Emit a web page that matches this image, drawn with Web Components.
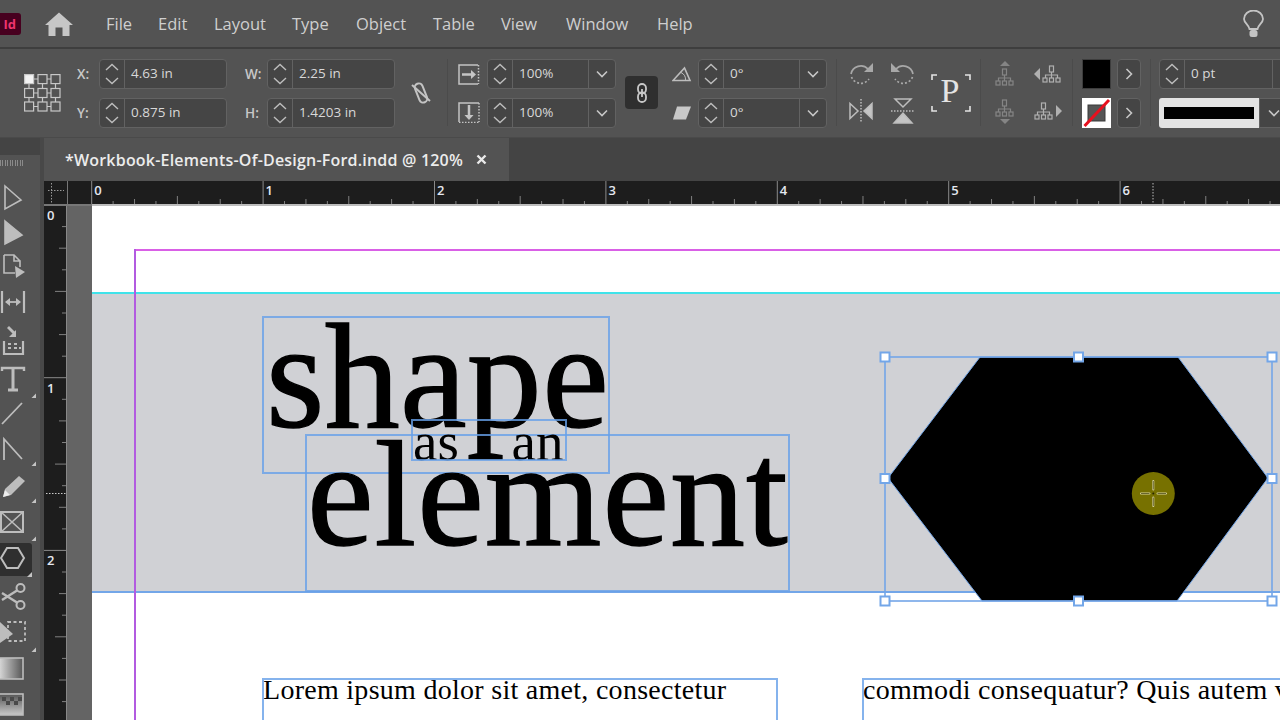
<!DOCTYPE html>
<html lang="en"><head><meta charset="utf-8"><title>InDesign</title>
<style>html,body{margin:0;padding:0;width:1280px;height:720px;overflow:hidden;background:#535353}</style>
</head><body>
<id-app></id-app>
<script>
const UI='"Open Sans","Noto Sans",sans-serif';
function def(name,css,html,init){
  customElements.define(name,class extends HTMLElement{
    connectedCallback(){
      if(this.shadowRoot)return;
      const r=this.attachShadow({mode:'open'});
      r.innerHTML='<style>'+css+'</style>'+(typeof html==='function'?html(this):html);
      if(init)init(this,r);
    }
  });
}
const I='#bdbdbd';

def('id-app',`:host{display:grid;grid-template-rows:49px 89px 43px 1fr;width:1280px;height:720px;overflow:hidden;background:#535353;font-family:${UI}}
.work{display:grid;grid-template-columns:44px 1fr;min-height:0;min-width:0}
.stack{display:grid;grid-template-rows:25px 1fr;min-height:0;min-width:0}
.view{display:grid;grid-template-columns:23px 25px 1fr;min-height:0;min-width:0;overflow:hidden}
.paste{background:#646464}`,
`<id-menubar></id-menubar><id-controlbar></id-controlbar><id-tabbar></id-tabbar>
<div class="work"><id-tools></id-tools><div class="stack"><id-hruler></id-hruler><div class="view"><id-vruler></id-vruler><div class="paste"></div><id-page></id-page></div></div></div>`);

def('id-menubar',`:host{display:flex;align-items:center;background:#535353;border-bottom:2px solid #3e3e3e;box-sizing:border-box;height:49px;color:#cfcfcf;font-size:16.5px;position:relative}
.logo{width:21px;height:22px;background:#47001f;border-radius:0 3px 3px 0;color:#f0346e;font:700 13px/22px ${UI};text-align:right;padding-right:5px;box-sizing:border-box;flex:none}
.home{margin-left:24px;flex:none;display:block}
nav{display:flex;margin-left:33px}
span{flex:none}
.bulb{margin-left:auto;margin-right:16px;display:block}`,
`<div class="logo">Id</div>
<svg class="home" width="28" height="24" viewBox="0 0 28 24"><path d="M14 0.5 L28 13 L24.5 13 L24.5 24 L17.5 24 L17.5 15.5 L10.5 15.5 L10.5 24 L3.5 24 L3.5 13 L0 13 Z" fill="#c6c6c6"/></svg>
<nav><span style="width:52px">File</span><span style="width:56px">Edit</span><span style="width:78px">Layout</span><span style="width:64px">Type</span><span style="width:77px">Object</span><span style="width:68px">Table</span><span style="width:65px">View</span><span style="width:91px">Window</span><span>Help</span></nav>
<svg class="bulb" width="21" height="28" viewBox="0 0 21 28" fill="none"><path d="M6.5 19 C6 15 1 13 1 9 A9.5 8.5 0 0 1 20 9 C20 13 15 15 14.5 19 Z" stroke="#c4c4c4" stroke-width="1.8"/><rect x="6.5" y="20" width="8" height="7" rx="2.5" fill="#c4c4c4"/></svg>`);

def('id-field',`:host{display:flex;box-sizing:border-box;height:30px;border:1.5px solid #626262;border-radius:4px;background:#454545;color:#d8d8d8;font-size:13.5px;overflow:hidden;flex:none}
.sp{width:24px;flex:none;border-right:1.5px solid #626262;display:flex;align-items:center;justify-content:center}
.v{flex:1;padding-left:6px;line-height:26px;white-space:nowrap}
.dd{width:26px;flex:none;border-left:1.5px solid #626262;display:flex;align-items:center;justify-content:center}`,
t=>`<div class="sp"><svg width="16" height="26" viewBox="0 0 16 26" fill="none" stroke="#bdbdbd" stroke-width="1.4"><path d="M2 9 L8 3.5 L14 9"/><path d="M2 17 L8 22.5 L14 17"/></svg></div><div class="v">${t.getAttribute('value')}</div>${t.hasAttribute('dropdown')?'<div class="dd"><svg width="14" height="10" viewBox="0 0 14 10" fill="none" stroke="#c6c6c6" stroke-width="1.6"><path d="M2 2.5 L7 7.5 L12 2.5"/></svg></div>':''}`,
(t)=>{t.style.width=t.getAttribute('w')+'px'});

const tree=(tx,ty,dim)=>`<g stroke="${dim}" stroke-width="1.2"><rect x="${tx+6.5}" y="${ty}" width="4" height="6"/><path d="M${tx+8.5} ${ty+6}v3M${tx+2.5} ${ty+12}v-3h12v3M${tx+8.5} ${ty+9}v3"/><rect x="${tx}" y="${ty+12}" width="4" height="4"/><rect x="${tx+6.5}" y="${ty+12}" width="4" height="4"/><rect x="${tx+13}" y="${ty+12}" width="4" height="4"/></g>`;

def('id-chev',`:host{display:flex;align-items:center;justify-content:center;box-sizing:border-box;width:24px;height:30px;border:1.5px solid #626262;border-radius:4px;background:#454545;flex:none}`,
`<svg width="10" height="14" viewBox="0 0 10 14" fill="none" stroke="#c6c6c6" stroke-width="1.6"><path d="M2.5 2 L7.5 7 L2.5 12"/></svg>`);

def('id-controlbar',`:host{display:flex;align-items:stretch;box-sizing:border-box;height:89px;padding:10px 0 11px 24px;background:#535353;border-bottom:1px solid #4a4a4a;overflow:hidden;color:#cfcfcf}
.col{display:flex;flex-direction:column;gap:8.5px;flex:none}
.row{display:flex;align-items:center;height:30px}
.lab{width:22px;flex:none;font:600 13.5px/30px ${UI};color:#c8c8c8}
.ic{width:22px;margin-right:7px;flex:none;display:flex;align-items:center}
.ic2{width:20px;margin-right:6px;flex:none;display:flex;align-items:center}
.div{width:1px;background:#4b4b4b;flex:none}
.c{flex:none;display:flex;align-items:center;justify-content:center}
.anchor{flex:none;align-self:center;display:block}
.chain{width:33px;height:33px;background:#2f2f2f;border-radius:4px;flex:none;align-self:center;display:flex;align-items:center;justify-content:center;margin-left:9px}
.p{position:relative;width:40px;height:38px;margin-left:15px;flex:none;align-self:center;display:flex;align-items:center;justify-content:center;font:34px/34px "Liberation Serif",serif;color:#e4e4e4;box-sizing:border-box;padding-bottom:4px;padding-right:2px}
.p svg{position:absolute;left:0;top:0}
.sw{width:29px;height:30px;flex:none;box-sizing:border-box;display:block}
.stroke{width:100px;height:30px;background:#e3e3e3;display:flex;align-items:center;justify-content:center;flex:none;border-radius:3px 0 0 3px}
.stroke i{display:block;width:90px;height:12px;background:#000}
.dd{width:30px;height:30px;box-sizing:border-box;border:1.5px solid #626262;background:#454545;display:flex;align-items:center;justify-content:center;flex:none}`,
`<svg class="anchor" width="37" height="38" viewBox="0 0 37 38" fill="none" stroke="#c8c8c8" stroke-width="1.2">
<rect x="0.6" y="0.6" width="9" height="9" fill="#f4f4f4"/><rect x="14" y="0.6" width="9" height="9"/><rect x="27" y="0.6" width="9" height="9"/>
<rect x="0.6" y="14.5" width="9" height="9"/><rect x="14" y="14.5" width="9" height="9"/><rect x="27" y="14.5" width="9" height="9"/>
<rect x="0.6" y="28" width="9" height="9"/><rect x="14" y="28" width="9" height="9"/><rect x="27" y="28" width="9" height="9"/>
<path d="M9.6 5h4.4M23 5h4M9.6 19h4.400M23 19h4M9.6 32.5h4.4M23 32.5h4M5 9.6v4.9M18.5 9.6v4.9M31.5 9.6v4.9M5 23.5v4.5M18.5 23.5v4.5M31.5 23.5v4.5"/></svg>
<div class="col" style="margin-left:16px"><div class="row"><span class="lab">X:</span><id-field w="128" value="4.63 in"></id-field></div><div class="row"><span class="lab">Y:</span><id-field w="128" value="0.875 in"></id-field></div></div>
<div class="col" style="margin-left:18px"><div class="row"><span class="lab">W:</span><id-field w="128" value="2.25 in"></id-field></div><div class="row"><span class="lab">H:</span><id-field w="128" value="1.4203 in"></id-field></div></div>
<div class="c" style="width:20px;margin-left:16px"><svg width="20" height="24" viewBox="0 0 20 24" fill="none" stroke="#c4c4c4" stroke-width="2"><rect x="-4" y="-10" width="8" height="20" rx="4" transform="translate(10 12) rotate(-22)"/><path d="M1 4 L19 20" stroke-width="2"/></svg></div>
<div class="div" style="margin-left:16px"></div>
<div class="col" style="margin-left:10px">
 <div class="row"><span class="ic"><svg width="22" height="21" viewBox="0 0 22 21" fill="none" stroke="#c4c4c4" stroke-width="1.5"><path d="M20 1H1V20H20"/><path d="M20.5 1v19" stroke-dasharray="1.5 1.5"/><path d="M4 10.5H14" stroke-width="2.5"/><path d="M13 6 L18 10.5 L13 15Z" fill="#c4c4c4" stroke="none"/></svg></span><id-field w="129" dropdown value="100%"></id-field></div>
 <div class="row"><span class="ic"><svg width="22" height="21" viewBox="0 0 22 21" fill="none" stroke="#c4c4c4" stroke-width="1.5"><path d="M1 20V1H21"/><path d="M1 20.5H21M21 1V20" stroke-dasharray="1.5 1.5"/><path d="M11 3V14" stroke-width="2.5"/><path d="M6.5 13 L11 18 L15.5 13Z" fill="#c4c4c4" stroke="none"/></svg></span><id-field w="129" dropdown value="100%"></id-field></div>
</div>
<div class="chain"><svg width="14" height="20" viewBox="0 0 14 20" fill="none" stroke="#c8c8c8" stroke-width="1.8"><rect x="3" y="1" width="8" height="9.5" rx="4"/><rect x="3" y="9.5" width="8" height="9.5" rx="4"/><path d="M7 6v8"/></svg></div>
<div class="col" style="margin-left:14px">
 <div class="row"><span class="ic2"><svg width="20" height="16" viewBox="0 0 20 16" fill="none" stroke="#bdbdbd" stroke-width="1.6"><path d="M1 14.5H18L12.5 2 Z"/><path d="M9 6.5 A8 8 0 0 1 13.5 14.5" stroke-width="1"/></svg></span><id-field w="129" dropdown value="0°"></id-field></div>
 <div class="row"><span class="ic2"><svg width="20" height="14" viewBox="0 0 20 14"><path d="M5 0.5H19L14 13.5H1Z" fill="#c8c8c8"/></svg></span><id-field w="129" dropdown value="0°"></id-field></div>
</div>
<div class="div" style="margin-left:9px"></div>
<div class="col" style="margin-left:11px;width:68px">
 <div class="row" style="justify-content:space-between"><svg width="26" height="26" viewBox="0 0 26 26" fill="none" stroke="#a8a8a8" stroke-width="1.7"><path d="M20 8 A10 10 0 0 0 3 13" /><path d="M3.5 16 A10 10 0 0 0 21 18" stroke-dasharray="2 2"/><path d="M25 2 V11 H16Z" fill="#a8a8a8" stroke="none"/></svg><svg width="26" height="26" viewBox="0 0 26 26" fill="none" stroke="#a8a8a8" stroke-width="1.7"><path d="M6 8 A10 10 0 0 1 23 13"/><path d="M22.5 16 A10 10 0 0 1 5 18" stroke-dasharray="2 2"/><path d="M1 2 V11 H10Z" fill="#a8a8a8" stroke="none"/></svg></div>
 <div class="row" style="justify-content:space-between"><svg width="26" height="26" viewBox="0 0 26 26" fill="none" stroke="#bdbdbd" stroke-width="1.5"><path d="M2 5.5 L10 13 L2 20.5Z"/><path d="M13 1V25" stroke-dasharray="1.5 1.5"/><path d="M24 5.5 L16 13 L24 20.5Z" fill="#c4c4c4"/></svg><svg width="26" height="26" viewBox="0 0 26 26" fill="none" stroke="#bdbdbd" stroke-width="1.5"><path d="M5 1 H21 L13 9Z"/><path d="M1 13H25" stroke-dasharray="1.5 1.5"/><path d="M4 25 H22 L13 15Z" fill="#c4c4c4"/></svg></div>
</div>
<div class="p"><svg width="40" height="38" viewBox="0 0 40 38" fill="none" stroke="#e4e4e4" stroke-width="1.6"><path d="M1 6V1H6M34 1H39V6M1 32V37H6M34 37H39V32"/></svg>P</div>
<div class="div" style="margin-left:9px"></div>
<div class="col" style="margin-left:14px;width:67px">
 <div class="row" style="justify-content:space-between"><svg width="20" height="26" viewBox="0 0 20 26" fill="none"><path d="M10 0L15 5H5Z" fill="#858585"/>${tree(1,8,'#858585')}</svg><svg width="28" height="22" viewBox="0 0 28 22" fill="none"><path d="M0 11L6 5V17Z" fill="#b0b0b0"/>${tree(9,3,'#b0b0b0')}</svg></div>
 <div class="row" style="justify-content:space-between"><svg width="20" height="26" viewBox="0 0 20 26" fill="none">${tree(1,2,'#858585')}<path d="M10 26L15 21H5Z" fill="#858585"/></svg><svg width="28" height="22" viewBox="0 0 28 22" fill="none">${tree(1,3,'#b0b0b0')}<path d="M28 11L22 5V17Z" fill="#b0b0b0"/></svg></div>
</div>
<div class="div" style="margin-left:10px"></div>
<div class="col" style="margin-left:9px">
 <div class="row"><div class="sw" style="background:#000;border:1px solid #3d3d3d"></div><id-chev style="margin-left:6px"></id-chev></div>
 <div class="row"><svg class="sw" viewBox="0 0 29 30"><rect width="29" height="30" fill="#fff"/><rect x="6" y="7" width="17" height="16" fill="#555" stroke="#3a3a3a"/><path d="M2.5 28 L27 2" stroke="#e8101e" stroke-width="3"/></svg><id-chev style="margin-left:6px"></id-chev></div>
</div>
<div class="div" style="margin-left:9px"></div>
<div class="col" style="margin-left:8px">
 <id-field w="141" dropdown value="0 pt"></id-field>
 <div class="row"><div class="stroke"><i></i></div><div class="dd"><svg width="14" height="10" viewBox="0 0 14 10" fill="none" stroke="#c6c6c6" stroke-width="1.6"><path d="M2 2.5 L7 7.5 L12 2.5"/></svg></div></div>
</div>`);

def('id-tabbar',`:host{display:grid;grid-template-columns:44px 465px 1fr;height:43px;background:#444}
.side{background:#535353;border-right:4px solid #484848;box-sizing:border-box;display:grid;grid-template-rows:17px 1fr}
.side b{display:block;background:#444}
.side i{display:block;margin-top:5px;height:6px;width:25px;background:repeating-linear-gradient(90deg,#8a8a8a 0 1px,transparent 1px 2.5px)}
.tab{background:#535353;display:flex;align-items:center;padding-left:21px;box-sizing:border-box;color:#ececec;font-size:16px;font-weight:600;letter-spacing:.2px;white-space:nowrap}
.x{margin-left:13px;flex:none;display:block}`,
`<div class="side"><b></b><i></i></div><div class="tab">*Workbook-Elements-Of-Design-Ford.indd @ 120%<svg class="x" width="11" height="11" viewBox="0 0 11 11" stroke="#eaeaea" stroke-width="2.4"><path d="M1.5 1.5L9.5 9.5M9.5 1.5L1.5 9.5"/></svg></div>`);

const corner='<path d="M36 30.5 V35 H31.5 Z" fill="#c4c4c4" stroke="none"/>';
const tools=[
 [197,15.5,`<path d="M5 4 L21 18 L5 27 Z"/>`],
 [232,15.5,`<path d="M5 4 L22 18 L5 27 Z" fill="${I}"/>`],
 [266,17.5,`<path d="M4 6H14L20 12V18M20 18V12H14V6M4 6V24H15"/><path d="M15 17 L25 23 L16 29Z" fill="${I}" stroke="none"/>`],
 [302,16,`<path d="M2 5V27M24 5V27" stroke-width="2.2"/><path d="M6 16H20" stroke-width="1.8"/><path d="M5 16L10 12V20ZM21 16L16 12V20Z" fill="${I}" stroke="none"/>`],
 [340,16.5,`<path d="M4 17V30H23V17" stroke-width="2.2"/><path d="M8 3L14 9" stroke-width="2.8"/><path d="M16 6V13H9Z" fill="${I}" stroke="none"/><path d="M8 20h3M14 20h3M8 24h3M14 24h3M19 24h2" stroke-width="2.2"/>`],
 [379,16,`<path d="M2 8V5H24V8" stroke-width="2.4"/><path d="M13 5V27M8 27H18" stroke-width="3"/>${corner}`],
 [414,18.5,`<path d="M2 29L22 8" stroke-width="1.8"/>`],
 [450,18.5,`<path d="M4 29V8L22 28" stroke-width="1.8"/>${corner}`],
 [487,18.5,`<path d="M3 29L5 21L19 8L25 13L11 27Z" fill="${I}" stroke="none"/><path d="M3 29L5 22L10 27Z" fill="#eee" stroke="none"/>${corner}`],
 [522,16,`<rect x="1" y="6" width="22" height="20" stroke-width="2"/><path d="M1 6L23 26M23 6L1 26" stroke-width="1.6"/>${corner}`],
 [558,16,`<path d="M1 16L7 6H18L24 16L18 26H7Z" stroke-width="2"/><path d="M32 30 V35 H27 Z" fill="#c4c4c4" stroke="none"/>`],
 [597,15.5,`<circle cx="20.5" cy="7" r="4" stroke-width="2"/><circle cx="20.5" cy="24" r="4" stroke-width="2"/><path d="M17 9.5L2 19M17 21.5L2 12" stroke-width="2.4"/>`],
 [633,15.5,`<rect x="8" y="5" width="17" height="19" stroke-dasharray="3 2.5" stroke-width="1.8"/><path d="M0 5L13 17L0 26Z" fill="${I}" stroke="none"/>${corner}`],
 [669,15.5,`<defs><linearGradient id="g"><stop offset="0" stop-color="#dadada"/><stop offset="1" stop-color="#555"/></linearGradient></defs><rect x="-1" y="5" width="24" height="21" fill="url(#g)" stroke-width="1.6"/>`],
 [705,15.5,`<defs><linearGradient id="h" x1="0" x2="0" y1="0" y2="1"><stop offset="0" stop-color="#555"/><stop offset="1" stop-color="#c8c8c8"/></linearGradient></defs><rect x="-1" y="5" width="24" height="21" fill="url(#h)" stroke-width="1.6"/><path d="M2 8h4v4h-4zM10 8h4v4h-4zM18 8h4v4h-4zM6 12h4v4h-4zM14 12h4v4h-4z" fill="#4a4a4a" stroke="none"/>`]
];
def('id-tools',`:host{display:block;background:#535353;border-right:4px solid #484848;box-sizing:border-box;overflow:hidden;height:539px;position:relative}
.t{height:36.3px;position:relative}
.t.sel::before{content:"";position:absolute;left:0;top:-1px;width:32px;height:33px;background:#2f2f2f;border-radius:0 3px 3px 0}
svg{position:absolute;left:0;overflow:visible}`,
tools.map(([y,c,b],i)=>`<div class="t${i==10?' sel':''}"><svg style="top:${(y-c-181-36.3*i).toFixed(1)}px" width="40" height="36" viewBox="0 0 40 36" fill="none" stroke="${I}" stroke-width="1.6">${b}</svg></div>`).join(''));

def('id-hruler',`:host{display:block;background:#1d1d1d;height:25px;position:relative;overflow:hidden}svg{display:block}`,
'',(t,r)=>{
 let s='<svg width="1236" height="25" viewBox="44 181 1236 25" font-family="\'Open Sans\',sans-serif" font-size="13" font-weight="600">';
 s+='<rect x="92" y="204" width="1188" height="2" fill="#bdbdbd"/><rect x="44" y="204" width="48" height="2" fill="#777"/>';
 s+='<path d="M48 190.5H64M51.5 183V203" stroke="#999" stroke-dasharray="1.5 1.5"/><path d="M67.5 181V204" stroke="#777"/>';
 const h=[3,5,3,8,3,5,3];
 for(let n=0;n<8;n++){const x=91.7+n*171.4;
  if(x>1280)break;
  s+=`<path d="M${x} 181V204" stroke="#8a8a8a"/><text x="${x+2.5}" y="195" fill="#e4e8f0">${n}</text>`;
  for(let k=1;k<8;k++){const X=x+k*21.42;s+=`<path d="M${X} ${204-h[k-1]}V204" stroke="#808080"/>`}
 }
 s+='<path d="M1153 183V204" stroke="#bbb" stroke-dasharray="1.5 1.5"/></svg>';
 r.innerHTML+=s;
});
def('id-vruler',`:host{display:block;background:#1d1d1d;position:relative;overflow:hidden;border-right:1px solid #888;box-sizing:border-box}svg{display:block}`,
'',(t,r)=>{
 let s='<svg width="22" height="514" viewBox="44 206 22 514" font-family="\'Open Sans\',sans-serif" font-size="13" font-weight="600">';
 const l=[4,7,4,11,4,7,4];
 for(let n=0;n<3;n++){const y=205+n*172.7;
  s+=`<path d="M44 ${y}H66" stroke="#8a8a8a"/><text x="47" y="${y+15}" fill="#e4e8f0">${n}</text>`;
  for(let k=1;k<8;k++){const Y=y+k*21.6;s+=`<path d="M${66-l[k-1]} ${Y}H66" stroke="#808080"/>`}
 }
 s+='<path d="M46 493.5H66" stroke="#ccc" stroke-dasharray="1.5 1.5"/></svg>';
 r.innerHTML+=s;
});

def('id-frame',`:host{position:absolute;display:block;box-sizing:border-box}
.b{position:absolute;inset:0;border:2px solid rgba(103,160,232,.8);box-sizing:border-box;pointer-events:none}
.t{position:absolute;font-family:"Liberation Serif",serif;color:#000;white-space:nowrap;line-height:1}`,
f=>`<div class="t"><slot></slot></div><div class="b"></div>`,
(f,r)=>{
 const a=n=>+f.getAttribute(n);
 f.style.cssText+=`left:${a('x')-92}px;top:${a('y')-206}px;width:${a('w')}px;height:${a('h')}px;`;
 const t=r.querySelector('.t'),fs=a('fs');
 t.style.fontSize=fs+'px';
 t.style.left=(a('tx')-a('x'))+'px';
 t.style.top=(a('base')-a('y')-fs*.8375)+'px';
 if(f.getAttribute('ls'))t.style.letterSpacing=f.getAttribute('ls');
 if(f.getAttribute('ws'))t.style.wordSpacing=f.getAttribute('ws');
 if(f.getAttribute('sw'))t.style.webkitTextStroke=f.getAttribute('sw')+' #000';
});

def('id-selection',`:host{position:absolute;left:793px;top:151px;width:387px;height:244px;display:block}
svg{position:absolute;left:0;top:0;overflow:visible}`,
`<svg width="387" height="244" viewBox="885 357 387 244" fill="none">
<path d="M980 357H1178L1268 478L1177 601H982L888 478Z" fill="#000" stroke="#73a6e8" stroke-width="1"/>
<rect x="885" y="357" width="387" height="244" stroke="#73a6e8" stroke-width="1.6"/>
${[[885,357],[1078.5,357],[1272,357],[885,478.5],[1272,478.5],[885,601],[1078.5,601],[1272,601]].map(([x,y])=>`<rect x="${x-4.5}" y="${y-4.5}" width="9" height="9" fill="#fff" stroke="#73a6e8" stroke-width="2"/>`).join('')}
<circle cx="1153.3" cy="493.5" r="21.5" fill="#777100"/>
<path d="M1153.3 481V489.500M1153.3 497.5V506M1141 493.5H1149.5M1157.5 493.5H1166" stroke="#d8d4a0" stroke-width="2" stroke-linecap="round"/>
<path d="M1153.3 481V489.500M1153.3 497.5V506M1141 493.5H1149.5M1157.5 493.5H1166" stroke="#3a3800" stroke-width=".7"/>
<circle cx="1153.3" cy="493.5" r="1" fill="#2a2800"/>
</svg>`);

def('id-page',`:host{display:block;position:relative;background:#fff;overflow:hidden;min-width:0}
.band{position:absolute;left:0;right:0;top:86px;height:301px;background:#d0d1d5;border-top:2px solid #3fe3ea;border-bottom:2px solid #73a6e8;box-sizing:border-box}
.mt{position:absolute;left:42px;right:0;top:43px;height:2px;background:#d960e6}
.ml{position:absolute;left:42px;top:43px;bottom:0;width:2px;background:#b25be0}`,
`<div class="band"></div><div class="mt"></div><div class="ml"></div>
<id-frame x="262" y="316" w="348" h="158" fs="150" tx="266" base="427" ls=".3px" sw="1.4px">shape</id-frame>
<id-frame x="305" y="434" w="485" h="158" fs="150" tx="307" base="545" ls="1px" sw="1.4px">element</id-frame>
<id-frame x="411" y="419" w="156" h="42" fs="55" tx="413" base="460" ws="39px">as an</id-frame>
<id-frame x="262" y="678" w="516" h="80" fs="28" tx="263" base="699" ls=".28px">Lorem ipsum dolor sit amet, consectetur</id-frame>
<id-frame x="862" y="678" w="516" h="80" fs="28" tx="863" base="699" ls=".28px">commodi consequatur? Quis autem v</id-frame>
<id-selection></id-selection>`);
</script>
</body></html>
